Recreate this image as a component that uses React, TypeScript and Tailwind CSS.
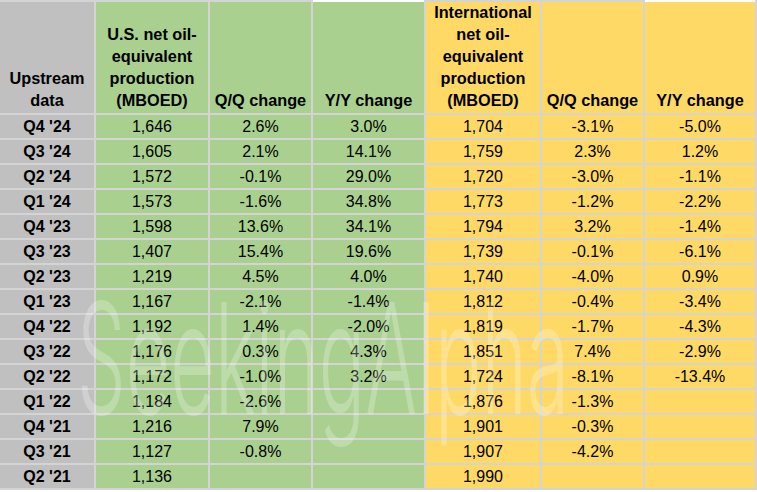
import React from 'react';

const rows: string[][] = [
  ["Q4 '24", '1,646', '2.6%', '3.0%', '1,704', '-3.1%', '-5.0%'],
  ["Q3 '24", '1,605', '2.1%', '14.1%', '1,759', '2.3%', '1.2%'],
  ["Q2 '24", '1,572', '-0.1%', '29.0%', '1,720', '-3.0%', '-1.1%'],
  ["Q1 '24", '1,573', '-1.6%', '34.8%', '1,773', '-1.2%', '-2.2%'],
  ["Q4 '23", '1,598', '13.6%', '34.1%', '1,794', '3.2%', '-1.4%'],
  ["Q3 '23", '1,407', '15.4%', '19.6%', '1,739', '-0.1%', '-6.1%'],
  ["Q2 '23", '1,219', '4.5%', '4.0%', '1,740', '-4.0%', '0.9%'],
  ["Q1 '23", '1,167', '-2.1%', '-1.4%', '1,812', '-0.4%', '-3.4%'],
  ["Q4 '22", '1,192', '1.4%', '-2.0%', '1,819', '-1.7%', '-4.3%'],
  ["Q3 '22", '1,176', '0.3%', '4.3%', '1,851', '7.4%', '-2.9%'],
  ["Q2 '22", '1,172', '-1.0%', '3.2%', '1,724', '-8.1%', '-13.4%'],
  ["Q1 '22", '1,184', '-2.6%', '', '1,876', '-1.3%', ''],
  ["Q4 '21", '1,216', '7.9%', '', '1,901', '-0.3%', ''],
  ["Q3 '21", '1,127', '-0.8%', '', '1,907', '-4.2%', ''],
  ["Q2 '21", '1,136', '', '', '1,990', '', ''],
];

const fill = [
  'bg-[#c0c0c0]',
  'bg-[#a9d08e]',
  'bg-[#a9d08e]',
  'bg-[#a9d08e]',
  'bg-[#ffd966]',
  'bg-[#ffd966]',
  'bg-[#ffd966]',
];

const headers: { lines: string[]; top: string }[] = [
  { lines: ['Upstream', 'data'], top: 'border-[#d4d4d4]' },
  { lines: ['U.S. net oil-', 'equivalent', 'production', '(MBOED)'], top: 'border-[#d4d4d4]' },
  { lines: ['Q/Q change'], top: 'border-[#d4d4d4]' },
  { lines: ['Y/Y change'], top: 'border-white' },
  { lines: ['International', 'net oil-', 'equivalent', 'production', '(MBOED)'], top: 'border-[#d4d4d4]' },
  { lines: ['Q/Q change'], top: 'border-[#d4d4d4]' },
  { lines: ['Y/Y change'], top: 'border-white' },
];

export default function App() {
  return (
    <div className="relative w-[757px] h-[492px] bg-white overflow-hidden font-['Liberation_Sans',Arial,sans-serif] text-black">
      <div className="grid grid-cols-[94px_112px_101px_111px_114px_101px_110px] grid-rows-[113px_repeat(15,23px)] gap-[2px] bg-[#d4d4d4] pr-[2px] pb-[2px] w-[757px]">
        {headers.map((h, i) => (
          <div
            key={i}
            className={`${fill[i]} ${h.top} border-t-2 flex flex-col justify-end items-center pb-[2px] text-[16.3px] font-bold leading-[22px] text-center`}
          >
            {h.lines.map((l, j) => (
              <span key={j} className="whitespace-nowrap">{l}</span>
            ))}
          </div>
        ))}
        {rows.map((r, ri) =>
          r.map((v, ci) => (
            <div
              key={`${ri}-${ci}`}
              className={`${fill[ci]} flex items-center justify-center text-[16px] leading-none whitespace-nowrap ${ci === 0 ? 'font-bold' : ''}`}
            >
              {v}
            </div>
          ))
        )}
      </div>

      {/* watermark */}
      <span className="pointer-events-none absolute left-[77px] top-[282px] origin-top-left [transform:scaleY(2)] text-[77px] font-light leading-none whitespace-nowrap text-white/25 font-['Inter','Liberation_Sans',sans-serif]">
        SeekingAlpha
      </span>
    </div>
  );
}
